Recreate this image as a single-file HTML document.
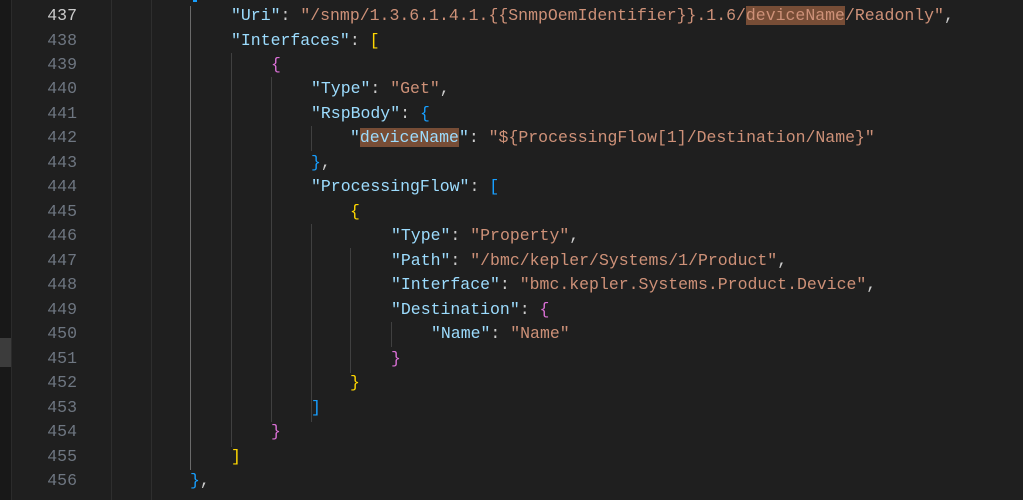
<!DOCTYPE html>
<html><head><style>
html,body{margin:0;padding:0;}
body{width:1023px;height:500px;background:#1f1f1f;position:relative;overflow:hidden;font-family:"Liberation Mono",monospace;font-size:16.5px;}
.strip{position:absolute;left:0;top:0;width:11px;height:500px;background:#181818;border-right:1px solid #2b2b2b;}
.mark{position:absolute;left:0;top:338px;width:11px;height:29px;background:#3c3c3c;}
.vl{position:absolute;top:0;height:500px;width:1px;background:#2e2e2e;}
.g{position:absolute;width:1px;background:#404040;}
.ln{position:absolute;left:20px;width:57px;text-align:right;color:#6e7681;height:24.47px;line-height:24.47px;}
.code{position:absolute;left:0;height:24.47px;line-height:24.47px;white-space:pre;color:#cccccc;}
.k{color:#9cdcfe}.s{color:#ce9178}.y{color:#ffd700}.p{color:#da70d6}.b{color:#179fff}
.hl{background:#774d36;}
</style></head><body>
<div class="strip"></div><div class="mark"></div>
<div class="vl" style="left:111px"></div><div class="vl" style="left:151px"></div>
<div class="g" style="left:190px;top:6px;height:464px;background:#6a6a6a"></div>
<div class="g" style="left:231px;top:53px;height:394px"></div>
<div class="g" style="left:271px;top:77px;height:345px"></div>
<div class="g" style="left:311px;top:126px;height:25px"></div>
<div class="g" style="left:311px;top:224px;height:198px"></div>
<div class="g" style="left:350px;top:248px;height:125px"></div>
<div class="g" style="left:391px;top:322px;height:25px"></div>
<div style="position:absolute;left:193px;top:0;width:4px;height:2px;background:#179fff"></div>
<div class="ln" style="top:4px;color:#cccccc">437</div>
<div class="ln" style="top:28.5px">438</div>
<div class="ln" style="top:52.9px">439</div>
<div class="ln" style="top:77.4px">440</div>
<div class="ln" style="top:101.9px">441</div>
<div class="ln" style="top:126.4px">442</div>
<div class="ln" style="top:150.8px">443</div>
<div class="ln" style="top:175.3px">444</div>
<div class="ln" style="top:199.8px">445</div>
<div class="ln" style="top:224.2px">446</div>
<div class="ln" style="top:248.7px">447</div>
<div class="ln" style="top:273.2px">448</div>
<div class="ln" style="top:297.6px">449</div>
<div class="ln" style="top:322.1px">450</div>
<div class="ln" style="top:346.6px">451</div>
<div class="ln" style="top:371px">452</div>
<div class="ln" style="top:395.5px">453</div>
<div class="ln" style="top:420px">454</div>
<div class="ln" style="top:444.5px">455</div>
<div class="ln" style="top:468.9px">456</div>
<div class="code" style="top:4px;left:231px"><span class="k">"Uri"</span>: <span class="s">"/snmp/1.3.6.1.4.1.{{SnmpOemIdentifier}}.1.6/<span class="hl">deviceName</span>/Readonly"</span>,</div>
<div class="code" style="top:28.5px;left:231px"><span class="k">"Interfaces"</span>: <span class="y">[</span></div>
<div class="code" style="top:52.9px;left:271px"><span class="p">{</span></div>
<div class="code" style="top:77.4px;left:311px"><span class="k">"Type"</span>: <span class="s">"Get"</span>,</div>
<div class="code" style="top:101.9px;left:311px"><span class="k">"RspBody"</span>: <span class="b">{</span></div>
<div class="code" style="top:126.4px;left:350px"><span class="k">"<span class="hl">deviceName</span>"</span>: <span class="s">"${ProcessingFlow[1]/Destination/Name}"</span></div>
<div class="code" style="top:150.8px;left:311px"><span class="b">}</span>,</div>
<div class="code" style="top:175.3px;left:311px"><span class="k">"ProcessingFlow"</span>: <span class="b">[</span></div>
<div class="code" style="top:199.8px;left:350px"><span class="y">{</span></div>
<div class="code" style="top:224.2px;left:391px"><span class="k">"Type"</span>: <span class="s">"Property"</span>,</div>
<div class="code" style="top:248.7px;left:391px"><span class="k">"Path"</span>: <span class="s">"/bmc/kepler/Systems/1/Product"</span>,</div>
<div class="code" style="top:273.2px;left:391px"><span class="k">"Interface"</span>: <span class="s">"bmc.kepler.Systems.Product.Device"</span>,</div>
<div class="code" style="top:297.6px;left:391px"><span class="k">"Destination"</span>: <span class="p">{</span></div>
<div class="code" style="top:322.1px;left:431px"><span class="k">"Name"</span>: <span class="s">"Name"</span></div>
<div class="code" style="top:346.6px;left:391px"><span class="p">}</span></div>
<div class="code" style="top:371px;left:350px"><span class="y">}</span></div>
<div class="code" style="top:395.5px;left:311px"><span class="b">]</span></div>
<div class="code" style="top:420px;left:271px"><span class="p">}</span></div>
<div class="code" style="top:444.5px;left:231px"><span class="y">]</span></div>
<div class="code" style="top:468.9px;left:190px"><span class="b">}</span>,</div>
</body></html>
